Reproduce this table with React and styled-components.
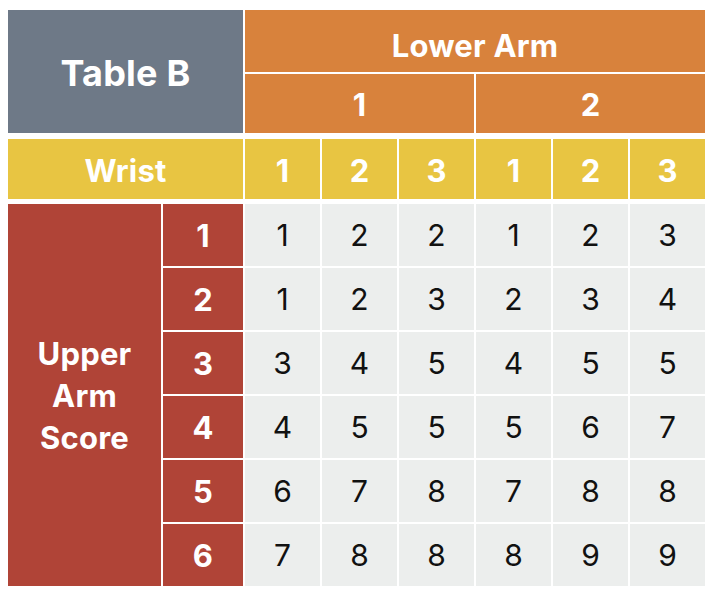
import React from "react";
import styled, { createGlobalStyle } from "styled-components";

const GlobalStyle = createGlobalStyle`
  html, body { margin: 0; padding: 0; background: #ffffff; }
  body { font-family: "Inter", "Liberation Sans", sans-serif; }
`;

const COLORS = {
  gray: "#6e7987",
  orange: "#d8823c",
  yellow: "#e8c542",
  red: "#b04437",
  cell: "#eceeed",
};

const Page = styled.div`
  padding: 10px 0 0 8px;
  width: 697px;
  display: flex;
  flex-direction: column;
`;

const Section = styled.div`
  display: grid;
  grid-template-columns: 153px 80px repeat(6, 1fr);
  grid-template-rows: ${(p) => p.$rows};
  column-gap: 2px;
  row-gap: 2px;
  margin-top: ${(p) => p.$offset || 0}px;
`;

const HeadCell = styled.div`
  background: ${(p) => COLORS[p.$tone]};
  color: #ffffff;
  font-weight: 700;
  font-size: ${(p) => p.$size || 31}px;
  letter-spacing: 0.2px;
  display: flex;
  align-items: center;
  justify-content: center;
  text-align: center;
  padding-top: ${(p) => p.$shift || 0}px;
  grid-column: ${(p) => p.$col || "auto"};
  grid-row: ${(p) => p.$row || "auto"};
`;

const SideLabel = styled(HeadCell)`
  line-height: 42px;
`;

const DataCell = styled.div`
  background: ${COLORS.cell};
  color: #111111;
  font-size: 30px;
  font-weight: 400;
  display: flex;
  align-items: center;
  justify-content: center;
`;

const data = [
  [1, 2, 2, 1, 2, 3],
  [1, 2, 3, 2, 3, 4],
  [3, 4, 5, 4, 5, 5],
  [4, 5, 5, 5, 6, 7],
  [6, 7, 8, 7, 8, 8],
  [7, 8, 8, 8, 9, 9],
];

export default function App() {
  return (
    <>
      <GlobalStyle />
      <Page>
        <Section $rows="62px 59px">
          <HeadCell $tone="gray" $col="1 / 3" $row="1 / 3" $size={36} $shift={2}>
            Table B
          </HeadCell>
          <HeadCell $tone="orange" $col="3 / 9" $row="1" $shift={8}>
            Lower Arm
          </HeadCell>
          <HeadCell $tone="orange" $col="3 / 6" $row="2" $shift={2}>
            1
          </HeadCell>
          <HeadCell $tone="orange" $col="6 / 9" $row="2" $shift={2}>
            2
          </HeadCell>
        </Section>
        <Section $rows="60px" $offset={6}>
          <HeadCell $tone="yellow" $col="1 / 3" $shift={2}>
            Wrist
          </HeadCell>
          {[1, 2, 3, 1, 2, 3].map((n, i) => (
            <HeadCell key={i} $tone="yellow" $shift={2}>
              {n}
            </HeadCell>
          ))}
        </Section>
        <Section $rows="repeat(6, 62px)" $offset={5}>
          <SideLabel $tone="red" $col="1" $row="1 / 7" $shift={2}>
            Upper
            <br />
            Arm
            <br />
            Score
          </SideLabel>
          {data.map((row, r) => (
            <React.Fragment key={r}>
              <HeadCell $tone="red" $col="2" $row={`${r + 1}`}>
                {r + 1}
              </HeadCell>
              {row.map((v, c) => (
                <DataCell key={c}>{v}</DataCell>
              ))}
            </React.Fragment>
          ))}
        </Section>
      </Page>
    </>
  );
}
